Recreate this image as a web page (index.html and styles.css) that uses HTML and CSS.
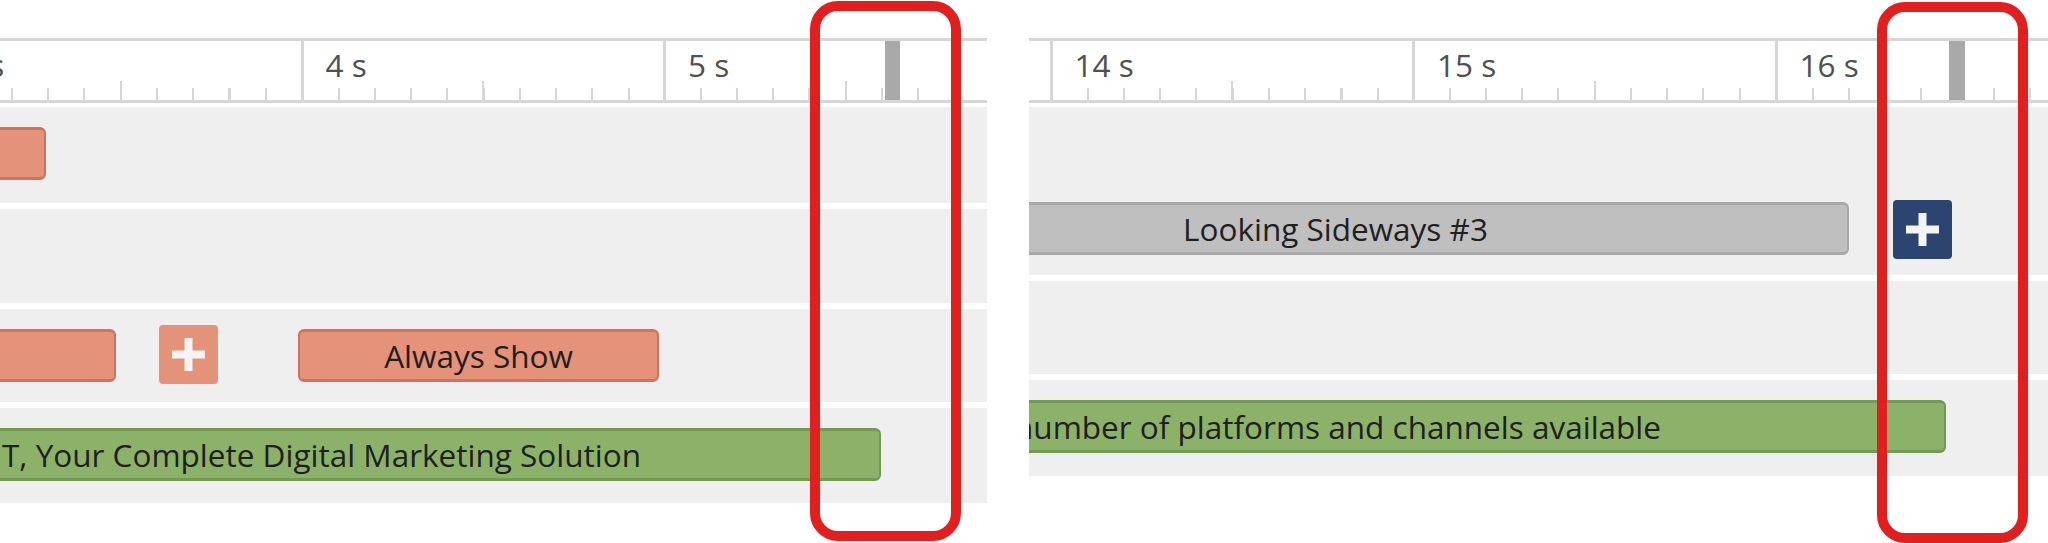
FILE: index.html
```html
<!DOCTYPE html>
<html lang="en">
  <head>
    <meta charset="utf-8" />
    <meta name="viewport" content="width=device-width,initial-scale=1.0" />
    <title>Timeline</title>
    <link rel="stylesheet" href="styles.css">
  </head>
  <body>
    <div class="timeline">
      <section class="pane pane-left">
        <div class="ruler">
          <div class="seconds" style="margin-left:-62px">
            <div class="sec"><span>3 s</span></div>
            <div class="sec"><span>4 s</span></div>
            <div class="sec"><span>5 s</span></div>
            <div class="sec"></div>
          </div>
          <div class="playhead" style="left:885px;width:15px"></div>
        </div>
        <div class="lanes">
          <div class="lane">
            <div class="clip orange" style="left:-60px;width:106px"></div>
          </div>
          <div class="lane"></div>
          <div class="lane">
            <div class="clip orange" style="left:-60px;width:176px"></div>
            <div class="add orange" style="left:159px">
              <svg viewBox="0 0 33 33" width="33" height="33"><path d="M16.5 0v33M0 16.5h33" /></svg>
            </div>
            <div class="clip orange center" style="left:298px;width:361px">Always Show</div>
          </div>
          <div class="lane">
            <div class="clip green" style="left:-8px;width:889px">T, Your Complete Digital Marketing Solution</div>
          </div>
        </div>
      </section>

      <section class="pane pane-right">
        <div class="ruler">
          <div class="seconds" style="margin-left:-342px">
            <div class="sec"></div>
            <div class="sec"><span>14 s</span></div>
            <div class="sec"><span>15 s</span></div>
            <div class="sec"><span>16 s</span></div>
            <div class="sec"></div>
          </div>
          <div class="playhead" style="left:920px;width:16px"></div>
        </div>
        <div class="lanes">
          <div class="lane tall">
            <div class="clip gray center" style="left:-207px;width:1027px">Looking Sideways #3</div>
            <div class="add navy" style="left:864px">
              <svg viewBox="0 0 33 33" width="33" height="33"><path d="M16.5 0v33M0 16.5h33" /></svg>
            </div>
          </div>
          <div class="lane"></div>
          <div class="lane">
            <div class="clip green" style="left:-25px;width:942px">number of platforms and channels available</div>
          </div>
        </div>
      </section>
    </div>

    <div class="callout callout-left"></div>
    <div class="callout callout-right"></div>
  </body>
</html>
```

FILE: styles.css
```css
body {
  margin: 0;
  background: #fff;
  font-family: "Open Sans", "Noto Sans", sans-serif;
  font-size: 31.5px;
  color: #1f1f1f;
}

.timeline {
  display: flex;
  gap: 42px;
  height: 543px;
}
.pane {
  position: relative;
  overflow: hidden;
  padding-top: 38px;
}
.pane-left {
  flex: 0 0 987px;
}
.pane-right {
  flex: 1;
}

/* ruler */
.ruler {
  position: relative;
  height: 59px;
  border-top: 3px solid #d6d6d6;
  border-bottom: 3px solid #d6d6d6;
}
.seconds {
  display: flex;
  height: 100%;
}
.sec {
  flex: 0 0 362.5px;
  box-sizing: border-box;
  border-left: 3px solid #d6d6d6;
  padding: 8px 0 0 22px;
  line-height: 32px;
  color: #505050;
  white-space: nowrap;
  background-image: linear-gradient(#d6d6d6, #d6d6d6),
    repeating-linear-gradient(to right, #d6d6d6 0 2px, transparent 2px 36.25px);
  background-size: 2px 19px, 100% 12px;
  background-position: 181.75px 100%, 0.5px 100%;
  background-repeat: no-repeat;
  background-origin: border-box;
}
.playhead {
  position: absolute;
  top: 0;
  height: 59px;
  background: #a9a9a9;
}

/* lanes */
.lanes {
  display: grid;
  gap: 6px;
  margin-top: 4px;
}
.pane-left .lanes {
  grid-template-rows: 96px 94px 93px 95px;
}
.pane-right .lanes {
  grid-template-rows: 168px 93px 96px;
}
.lane {
  position: relative;
  background: #efefef;
}

.clip {
  position: absolute;
  top: 20px;
  height: 53px;
  box-sizing: border-box;
  border-style: solid;
  border-width: 3px 2px;
  border-radius: 6px;
  padding: 0 8px;
  display: flex;
  align-items: center;
  white-space: nowrap;
  overflow: hidden;
  line-height: 1;
}
.clip.center {
  justify-content: center;
}
.clip.orange {
  background: #e5927a;
  border-color: #cd7360;
}
.clip.green {
  background: #8cb26a;
  border-color: #739a53;
}
.clip.gray {
  background: #bfbfbf;
  border-color: #a9a9a9;
}

.add {
  position: absolute;
  top: 16px;
  width: 59px;
  height: 59px;
  border-radius: 4px;
  display: flex;
  align-items: center;
  justify-content: center;
}
.add svg path {
  stroke: #f4f4f4;
  stroke-width: 8;
}
.add.orange {
  background: #e5927a;
}
.add.navy {
  background: #2c4470;
}

.lane.tall .clip {
  top: auto;
  bottom: 20px;
}
.lane.tall .add {
  top: auto;
  bottom: 16px;
}

/* red highlight boxes */
.callout {
  position: absolute;
  box-sizing: border-box;
  border: 10px solid #e11f1f;
  border-radius: 28px;
}
.callout-left {
  left: 810px;
  top: 1px;
  width: 151px;
  height: 540px;
}
.callout-right {
  left: 1877px;
  top: 2px;
  width: 151px;
  height: 541px;
}
```
